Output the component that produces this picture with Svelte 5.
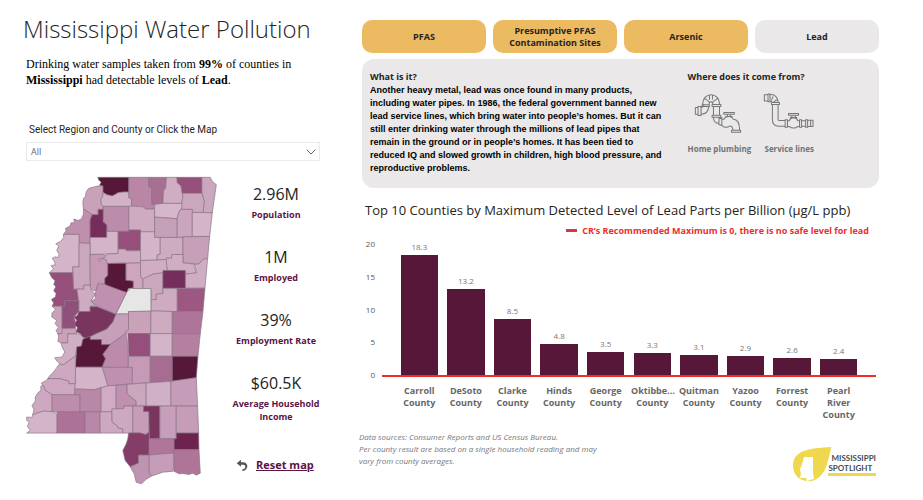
<script>
  const tabs = ['PFAS', 'Presumptive PFAS Contamination Sites', 'Arsenic', 'Lead'];
  const stats = [
    { value: '2.96M', label: 'Population' },
    { value: '1M', label: 'Employed' },
    { value: '39%', label: 'Employment Rate' },
    { value: '$60.5K', label: 'Average Household Income' }
  ];
  const bars = [
    { name: 'Carroll', value: 18.3 },
    { name: 'DeSoto', value: 13.2 },
    { name: 'Clarke', value: 8.5 },
    { name: 'Hinds', value: 4.8 },
    { name: 'George', value: 3.5 },
    { name: 'Oktibbe...', value: 3.3 },
    { name: 'Quitman', value: 3.1 },
    { name: 'Yazoo', value: 2.9 },
    { name: 'Forrest', value: 2.6 },
    { name: 'Pearl River', value: 2.4 }
  ];
  const ticks = [20, 15, 10, 5, 0];
  const maxLevel = 20;

  // [fill, polygon points]
  const counties = [
    ['#571739', '235,22 328,22 328,66 314,66 296,68 288,75 278,78 262,74 250,67 250,48 240,46 245,37 238,30'],
    ['#c9a2b9', '250,48 250,80 244,88 246,103 251,110 251,118 236,118 236,134 218,134 192,116 190,97 192,85 198,80 200,65 208,55 235,48'],
    ['#d3b2c7', '250,67 262,74 278,78 296,68 314,66 328,66 328,83 336,86 336,109 251,109 246,103 244,88 250,80'],
    ['#b987a5', '328,22 388,22 388,50 396,52 396,103 405,103 405,117 378,117 370,110 336,108 336,86 328,83'],
    ['#a76f92', '388,22 441,22 438,55 432,62 430,100 405,103 396,103 396,52 388,50'],
    ['#d1adc4', '441,22 472,22 473,38 484,47 488,71 490,80 486,100 430,100 432,62 438,55'],
    ['#964f7a', '472,22 547,22 547,70 488,70 484,47 473,38'],
    ['#cba7be', '547,22 572,22 578,34 590,44 578,128 550,128 554,94 547,70'],
    ['#cba7be', '488,70 547,70 554,94 550,127 518,127 518,118 486,118 486,100 490,80'],
    ['#d5b6ca', '405,103 430,100 487,100 486,118 480,121 472,146 405,141'],
    ['#cba5be', '486,118 518,118 518,200 472,202 472,146 480,121'],
    ['#d4b4c9', '518,127 578,128 570,199 518,199'],
    ['#bc8cab', '251,109 328,109 328,184 262,184 262,165 254,160 251,140'],
    ['#cfabc2', '328,109 336,108 370,110 378,117 405,117 405,185 363,185 363,180 328,180'],
    ['#c69fb8', '405,141 472,146 472,202 405,202'],
    ['#c08fae', '192,116 218,134 212,150 212,220 179,218 179,193 132,193 140,182 138,175 152,168 155,158 165,158 163,147 177,151 187,145 192,132'],
    ['#752e5b', '236,118 251,118 251,155 262,165 262,202 212,202 212,150 218,134 236,134'],
    ['#d4b4c9', '212,202 262,202 262,184 296,184 296,250 262,252 212,253'],
    ['#964f7a', '296,184 328,184 328,180 363,180 363,242 320,242 318,237 296,237'],
    ['#d4b4c9', '132,193 179,193 179,290 160,290 160,308 90,308 102,296 95,286 108,284 104,272 98,265 107,260 117,262 119,252 112,240 118,228 109,221 125,213 133,202'],
    ['#cba7be', '179,218 212,220 212,345 193,345 193,357 162,357 160,290 179,290'],
    ['#c69ab5', '212,253 250,253 262,258 265,275 265,315 256,325 256,343 236,338 230,360 221,362 213,355'],
    ['#cfabc2', '296,237 318,237 320,242 363,242 363,278 262,280 262,270 250,264 240,275 236,267 255,263 262,252 296,250'],
    ['#d4b4c9', '363,185 405,185 405,202 422,202 422,252 413,255 413,270 363,271'],
    ['#cfabc2', '422,202 490,202 490,253 456,255 456,264 440,264 440,268 413,269 413,255 422,252'],
    ['#c69fb8', '490,200 570,199 564,265 550,268 538,282 525,282 490,278'],
    ['#d1adc4', '440,268 440,264 456,264 456,253 490,253 490,278 525,282 523,290 530,308 497,312 497,301 443,301 440,285'],
    ['#cda6be', '319,280 363,278 363,320 370,328 371,355 341,355 341,333 319,330'],
    ['#571739', '265,280 319,279 319,330 341,333 341,353 327,355 321,367 283,358 256,343 256,325 265,315'],
    ['#d1adc4', '363,271 413,270 440,268 443,301 430,308 400,312 370,328 363,318'],
    ['#cba7be', '370,326 400,312 430,308 430,370 410,372 410,388 394,388 394,355 371,355'],
    ['#d1adc4', '525,282 538,282 550,268 564,265 556,354 497,354 497,312 531,308'],
    ['#752e5b', '430,301 497,301 497,354 430,354'],
    ['#cfabc2', '430,355 473,355 473,424 394,422 394,388 410,388 410,372 430,370'],
    ['#9c5783', '473,355 556,354 550,424 473,424'],
    ['#e6e6e6', '333,355 394,355 394,422 327,424 327,431 289,431 321,367'],
    ['#964f7a', '90,308 160,308 162,357 176,357 176,391 137,391 135,408 98,408 103,398 96,388 108,380 110,370 103,362 109,350 103,342 107,332 97,322'],
    ['#cfabc2', '172,357 193,357 193,345 212,345 215,361 228,372 214,392 228,405 212,409 212,424 178,424 178,391'],
    ['#bf90af', '236,340 256,343 321,367 289,432 228,405 214,392 228,386 226,372 230,360'],
    ['#c9a2b9', '98,408 128,408 128,474 140,474 130,490 115,490 110,480 117,472 107,460 112,450 97,440 98,428 108,418'],
    ['#91507b', '137,391 178,391 178,424 164,440 170,462 168,474 128,474 128,408 135,408'],
    ['#c9a2b9', '128,475 168,475 172,490 145,491 145,518 125,518 115,513 118,500 115,490 128,490'],
    ['#d0afc5', '145,491 180,491 196,503 186,527 172,530 168,557 133,583 120,580 112,572 106,562 128,560 136,545 128,530 125,518 145,518'],
    ['#c69fb8', '289,432 327,431 327,480 310,497 290,510 272,523 246,523 246,508 212,508 212,498 235,488 262,476'],
    ['#7a355f', '178,424 212,424 212,409 232,409 289,432 280,455 262,476 230,490 200,505 190,500 182,490 170,485 174,472 165,462 172,450 164,440 174,436'],
    ['#c9a2b9', '327,424 394,424 394,490 325,490 318,483 327,478'],
    ['#cfabc2', '394,422 458,424 458,490 394,490'],
    ['#ad7599', '458,424 550,424 542,490 458,490'],
    ['#964f7a', '325,490 392,490 392,558 328,558'],
    ['#d4b4c9', '392,490 458,490 458,558 392,558'],
    ['#b5809f', '458,490 542,490 535,558 458,558'],
    ['#bc8aaa', '272,523 290,510 320,488 326,530 326,592 248,592 258,565 250,552'],
    ['#571739', '190,507 212,498 212,508 246,508 246,523 272,523 250,552 258,565 248,590 168,590 172,530 186,527'],
    ['#c69ab6', '327,558 392,558 392,637 338,640 338,592 327,592'],
    ['#bf90b0', '248,591 338,591 338,640 265,647'],
    ['#a76c91', '392,558 458,558 458,633 392,637'],
    ['#571739', '458,558 535,558 530,622 500,627 458,633'],
    ['#d4b4c9', '168,591 248,591 265,646 245,652 225,658 166,655'],
    ['#cda8c0', '118,583 133,583 168,557 168,640 148,640 148,632 120,625 85,625 92,615 100,608 110,595'],
    ['#cda8c0', '85,625 120,625 148,632 148,640 166,640 166,673 98,673 78,660 66,638 78,632'],
    ['#cda8c0', '72,645 78,660 98,673 98,725 72,722 40,733 44,718 38,705 48,692 48,680 55,668 65,660 64,648'],
    ['#bd8dac', '98,673 182,673 182,724 98,725'],
    ['#b987a7', '166,657 225,658 245,652 245,723 182,724 182,673 166,673'],
    ['#d0abc3', '245,653 265,646 290,645 290,715 278,724 245,724'],
    ['#bf90b0', '290,645 323,642 323,670 350,692 350,707 313,707 313,715 290,715'],
    ['#cba7be', '323,642 380,638 380,707 350,707 350,692 323,670'],
    ['#d0b0c6', '380,638 454,633 454,707 380,707'],
    ['#c59db8', '454,633 530,622 534,707 454,707'],
    ['#d4b4c9', '40,733 72,722 100,724 113,732 113,788 22,788 33,779 24,768 30,754 22,750 22,740 38,741'],
    ['#ac7297', '113,724 197,724 197,788 113,788'],
    ['#b987a7', '197,724 242,724 242,788 197,788'],
    ['#cda8c0', '242,724 277,724 278,755 292,765 296,773 310,775 310,788 242,788'],
    ['#cda8c0', '277,715 313,715 313,707 340,707 340,788 310,788 310,775 296,773 292,765 278,755'],
    ['#c59db8', '340,707 372,707 372,723 388,723 388,788 370,790 340,788'],
    ['#7a355f', '372,707 421,707 421,805 389,805 388,723 372,723'],
    ['#c79fba', '421,707 470,707 470,805 421,805'],
    ['#c59db8', '470,707 534,707 537,788 470,788'],
    ['#6d2350', '470,788 537,788 538,838 463,838 463,805 470,805'],
    ['#843d68', '327,788 360,787 378,792 389,785 389,854 357,854 357,878 332,889 317,870 310,840 320,820 325,805'],
    ['#b07598', '389,805 463,805 463,848 430,850 389,854'],
    ['#bf94b0', '357,854 389,854 389,905 395,917 378,928 366,940 350,935 344,910 332,889 357,878'],
    ['#c59db8', '389,854 430,850 463,848 461,902 430,905 395,917 389,905'],
    ['#ae7597', '463,838 538,838 542,908 530,914 520,908 508,912 490,909 478,910 463,902']
  ];

  let active = 'Lead';
  let region = 'All';

  function reset() {
    region = 'All';
  }
</script>

<main class="page">
  <section class="left">
    <h1>Mississippi Water Pollution</h1>
    <p class="lede">
      Drinking water samples taken from <b>99%</b> of counties in <b>Mississippi</b> had detectable levels of <b>Lead</b>.
    </p>

    <label class="select-label" for="region">Select Region and County or Click the Map</label>
    <div class="select-box">
      <select id="region" bind:value={region}>
        <option>All</option>
      </select>
      <svg class="chevron" viewBox="0 0 10 6" aria-hidden="true"><path d="M.7.7 5 5 9.3.7" /></svg>
    </div>

    <div class="map-row">
      <svg class="map" viewBox="20 15 575 930" role="img" aria-label="Mississippi counties">
        {#each counties as [fill, points]}
          <polygon {fill} {points} />
        {/each}
      </svg>
      <div class="stats">
        {#each stats as stat}
          <div class="stat">
            <div class="value">{stat.value}</div>
            <div class="label">{stat.label}</div>
          </div>
        {/each}
        <button class="reset" on:click={reset}>
          <svg viewBox="0 0 34 36" aria-hidden="true">
            <path d="M14 2 2 12l12 10v-6h6c9 0 9 12-2 13v5c19-2 18-25 2-25h-6z" />
          </svg>
          <span>Reset map</span>
        </button>
      </div>
    </div>
  </section>

  <section class="right">
    <nav class="tabs">
      {#each tabs as tab}
        <button class:active={tab === active} on:click={() => (active = tab)}>{tab}</button>
      {/each}
    </nav>

    <article class="info">
      <div class="what">
        <h2>What is it?</h2>
        <p>
          Another heavy metal, lead was once found in many products, including water pipes. In 1986, the federal
          government banned new lead service lines, which bring water into people’s homes. But it can still enter
          drinking water through the millions of lead pipes that remain in the ground or in people’s homes. It has been
          tied to reduced IQ and slowed growth in children, high blood pressure, and reproductive problems.
        </p>
      </div>
      <div class="where">
        <h2>Where does it come from?</h2>
        <div class="sources">
          <figure>
            <svg viewBox="215 245 155 130" aria-hidden="true">
              <path d="M222 294h8v20h-8zM230 291h9v27h-9zM239 294c6 0 8-2 9-8M239 314c15 0 22-8 23-24M242 286h22v5h-22zM244 286c0-40 50-40 50 0M262 286c2-12 11-12 13 0M264 257v14M273 257v14M251 268l13 10M287 268l-13 10" />
              <path d="M272 285h26v6h-26zM276 291v26M294 291v26M272 317h26v6h-26zM276 323c0 12 7 18 17 19M294 323c1 4 3 5 6 5M301 325v23l-9-3 1-22zM301 329h6c3-6 7-8 14-8 8 0 12 3 14 8 13 0 19 10 19 33h-20c0-9-3-13-9-13-8 6-17 5-24-1M330 362h27v6h-27zM311 321h22M318 321v-7M326 321v-7M307 309h31v5h-31z" />
            </svg>
            <figcaption>Home plumbing</figcaption>
          </figure>
          <figure>
            <svg viewBox="418 239 155 130" aria-hidden="true">
              <path d="M422 250h11v19h-11zM433 248h6v23h-6zM439 250c15-2 24 9 24 23M439 269c4 0 6 1 6 5M443 273h24v6h-24zM446 279v45c0 13 8 20 20 20h18M463 279v44c0 3 1 4 4 4h17M448 255l-5 12M459 265l-10 7" />
              <path d="M484 325h7v22h-7zM491 328h5c2-6 6-9 13-9s11 3 13 9h5v17h-6c-5 6-18 6-24 0h-6zM527 325h6v22h-6zM533 328h12v16h-12zM545 325h6v22h-6zM551 326h16v19h-16zM560 326v19M498 318h22M504 318v-7M514 318v-7M494 306h30v5h-30z" />
            </svg>
            <figcaption>Service lines</figcaption>
          </figure>
        </div>
      </div>
    </article>

    <h2 class="chart-title">Top 10 Counties by Maximum Detected Level of Lead Parts per Billion (µg/L ppb)</h2>
    <p class="legend"><i></i>CR’s Recommended Maximum is 0, there is no safe level for lead</p>

    <div class="chart">
      <div class="axis">
        {#each ticks as tick}
          <span>{tick}</span>
        {/each}
      </div>
      <div class="plot">
        <div class="bars">
          {#each bars as bar}
            <div class="column">
              <span>{bar.value}</span>
              <div class="bar" style="height: {(bar.value / maxLevel) * 100}%"></div>
            </div>
          {/each}
        </div>
        <div class="names">
          {#each bars as bar}
            <span>{bar.name} County</span>
          {/each}
        </div>
      </div>
    </div>

    <footer>
      <p>
        Data sources: Consumer Reports and US Census Bureau.<br />
        Per county result are based on a single household reading and may vary from county averages.
      </p>
      <div class="logo">
        <svg viewBox="50 36 120 108" aria-hidden="true">
          <path fill="#f0d84e" d="M168 39C157 87 151 119 125 134 92 154 53 132 53 97 53 48 99 43 168 39z" />
          <path fill="#fff" d="M86 69h27v46l3 20-13 3-8 4-3-10H73l4-12-3-14 7-18z" />
        </svg>
        <div class="brand"><span>MISSISSIPPI</span><span>SPOTLIGHT</span></div>
      </div>
    </footer>
  </section>
</main>

<style>
  :global(body) {
    margin: 0;
    background: #fff;
    color: #252423;
    font-family: "Open Sans", "Noto Sans", sans-serif;
  }

  h1,
  h2,
  p,
  figure {
    margin: 0;
  }

  button {
    border: 0;
    padding: 0;
    font: inherit;
    cursor: pointer;
  }

  .page {
    display: grid;
    grid-template-columns: minmax(0, 297fr) minmax(0, 517fr);
    gap: 42px;
    padding: 12px 44px 0 23px;
  }

  h1 {
    font-size: 24px;
    font-weight: 300;
    line-height: 34px;
    white-space: nowrap;
  }

  .lede {
    margin: 10px 0 0 3px;
    color: #000;
    font: 12px/16px "Liberation Serif", serif;
  }

  .select-label {
    display: block;
    margin: 34px 0 0 6px;
    font: 10px/16px Roboto, sans-serif;
  }

  .select-box {
    position: relative;
    margin: 4px 0 0 3px;
  }

  select {
    display: block;
    width: 100%;
    height: 19px;
    padding: 0 4px;
    border: 1px solid #eaeaea;
    background: #fff;
    color: #666;
    font: 9px "Open Sans", sans-serif;
    appearance: none;
  }

  .chevron {
    position: absolute;
    top: 7px;
    right: 4px;
    width: 10px;
    fill: none;
    stroke: #666;
    pointer-events: none;
  }

  .map-row {
    display: grid;
    grid-template-columns: 192fr 88fr;
    gap: 17px;
    margin-top: 14px;
  }

  .map {
    display: block;
    width: 100%;
    margin-left: 3px;
  }

  .map polygon {
    stroke: #8a7384;
    stroke-width: 2;
    stroke-linejoin: round;
  }

  .stats {
    display: flex;
    flex-direction: column;
    gap: 25px;
    padding-top: 8px;
    text-align: center;
  }

  .value {
    font-size: 16px;
    line-height: 22px;
  }

  .label {
    margin-top: 3px;
    color: #5c1445;
    font-size: 9px;
    font-weight: 700;
    line-height: 13px;
  }

  .reset {
    display: flex;
    align-items: center;
    gap: 8px;
    margin: 9px 0 0 4px;
    background: none;
    color: #5c1445;
    font-size: 11px;
    font-weight: 700;
    line-height: 16px;
    text-decoration: underline;
    white-space: nowrap;
  }

  .reset svg {
    width: 12px;
    fill: #555;
  }

  .tabs {
    display: grid;
    grid-template-columns: repeat(4, 1fr);
    gap: 7px;
    margin-top: 8px;
  }

  .tabs button {
    height: 33px;
    padding: 0 12px;
    border-radius: 10px;
    background: #ebba61;
    color: #252423;
    font-size: 9px;
    font-weight: 700;
    line-height: 12px;
  }

  .tabs .active {
    background: #eae8e9;
  }

  .info {
    display: grid;
    grid-template-columns: 300fr 183fr;
    gap: 17px;
    min-height: 109px;
    margin-top: 6px;
    padding: 11px 8px 9px;
    border-radius: 12px;
    background: #eae8e9;
  }

  .info h2 {
    font-size: 9px;
    line-height: 13px;
  }

  .info p {
    margin-top: 1px;
    color: #000;
    font: bold 9px/13px "Liberation Sans", sans-serif;
  }

  .sources {
    display: flex;
    gap: 12px;
    margin-top: 8px;
  }

  figure {
    text-align: center;
    white-space: nowrap;
  }

  figure svg {
    display: block;
    width: 52px;
    margin: 0 auto;
    fill: none;
    stroke: #777;
    stroke-width: 3;
    stroke-linejoin: round;
  }

  figcaption {
    margin-top: 8px;
    color: #747273;
    font-size: 8px;
    font-weight: 700;
    line-height: 12px;
  }

  .chart-title {
    margin: 12px 0 0 3px;
    font-size: 13px;
    font-weight: 400;
    line-height: 20px;
    white-space: nowrap;
  }

  .legend {
    display: flex;
    align-items: center;
    justify-content: flex-end;
    gap: 5px;
    margin: 4px 10px 0 0;
    color: #ee2d2a;
    font-size: 9px;
    font-weight: 700;
    line-height: 13px;
  }

  .legend i {
    width: 11px;
    height: 3px;
    background: #d13a40;
  }

  .chart {
    display: grid;
    grid-template-columns: 13px 1fr;
    gap: 7px;
    margin: 1px 3px 0 0;
  }

  .axis {
    display: flex;
    flex-direction: column;
    justify-content: space-between;
    height: 143px;
    color: #555;
    font-size: 8px;
    line-height: 12px;
    text-align: right;
  }

  .bars,
  .names {
    display: grid;
    grid-template-columns: repeat(10, 1fr);
    padding: 0 14px;
    text-align: center;
  }

  .bars {
    height: 131px;
    margin-top: 6px;
    border-bottom: 2px solid #ee2d2a;
  }

  .column {
    display: flex;
    flex-direction: column;
    justify-content: flex-end;
    align-items: center;
    height: 131px;
    color: #777;
    font-size: 8px;
    line-height: 12px;
  }

  .column span {
    margin-bottom: 2px;
  }

  .bar {
    flex-shrink: 0;
    width: 80%;
    background: #571739;
  }

  .names {
    margin-top: 8px;
    color: #666;
    font-size: 9px;
    font-weight: 700;
    line-height: 12px;
  }

  .names span {
    min-width: 0;
    padding: 0 2px;
  }

  footer {
    display: flex;
    justify-content: space-between;
    margin-top: 10px;
  }

  footer p {
    max-width: 252px;
    margin-left: -3px;
    color: #777;
    font-size: 8px;
    font-style: italic;
    line-height: 12px;
  }

  .logo {
    display: flex;
    align-items: center;
    margin: 15px 3px 0 0;
  }

  .logo svg {
    width: 40px;
    margin-right: -4px;
  }

  .brand {
    border-bottom: 3px solid #f0d84e;
    color: #444c50;
    font: bold 8px/10px Lato, sans-serif;
  }

  .brand span {
    display: block;
  }

  .brand span:first-child {
    padding-left: 3px;
  }
</style>
